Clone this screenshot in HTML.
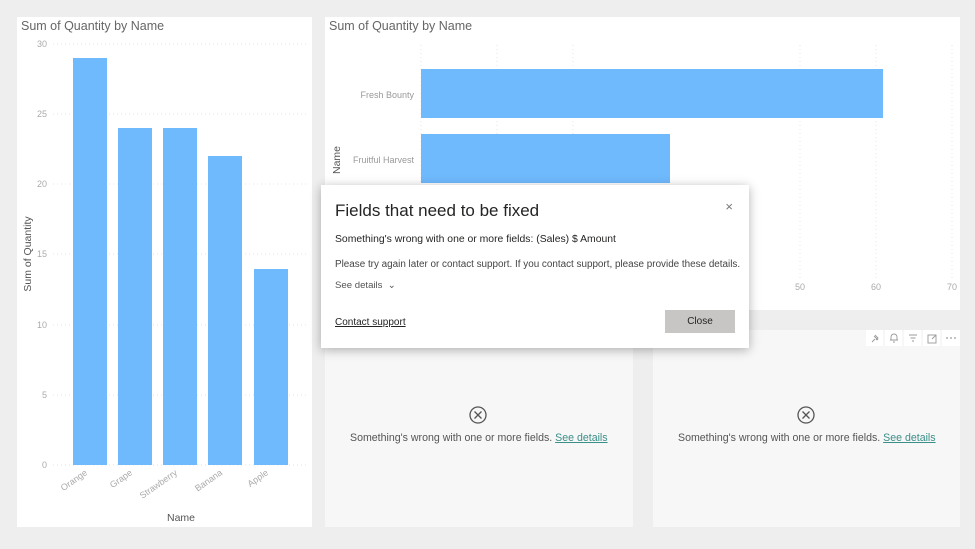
<!DOCTYPE html>
<html><head><meta charset="utf-8"><style>
body{margin:0;width:975px;height:549px;background:#eeeeee;font-family:"Liberation Sans",sans-serif;position:relative;overflow:hidden}
.p{position:absolute;background:#fff}
.modal{position:absolute;left:321px;top:185px;width:428px;height:163px;background:#fff;box-shadow:0 2px 10px rgba(0,0,0,.3)}
.modal div{position:absolute;white-space:nowrap;color:#252423}
.err{position:absolute;font-size:10.6px;color:#555;white-space:nowrap}
.err a{color:#3a8f88;text-decoration:underline}
</style></head><body>
<div class="p" style="left:17px;top:17px;width:295px;height:510px"></div>
<div class="p" style="left:325px;top:17px;width:635px;height:293px"></div>
<div class="p" style="left:325px;top:330px;width:308px;height:197px;background:#f7f7f7"></div>
<div class="p" style="left:653px;top:330px;width:307px;height:197px;background:#f7f7f7"></div>
<svg width="975" height="549" style="position:absolute;left:0;top:0" font-family="Liberation Sans, sans-serif">
<text x="21" y="30" font-size="12.5" fill="#666">Sum of Quantity by Name</text>
<g stroke="#e4e4e4" stroke-dasharray="1,3">
<line x1="53" x2="307" y1="44" y2="44"/><line x1="53" x2="307" y1="114" y2="114"/><line x1="53" x2="307" y1="184" y2="184"/><line x1="53" x2="307" y1="254" y2="254"/><line x1="53" x2="307" y1="325" y2="325"/><line x1="53" x2="307" y1="395" y2="395"/><line x1="53" x2="307" y1="465" y2="465"/>
</g>
<g font-size="9" fill="#aaa" text-anchor="end">
<text x="47" y="47">30</text><text x="47" y="117">25</text><text x="47" y="187">20</text><text x="47" y="257">15</text><text x="47" y="328">10</text><text x="47" y="398">5</text><text x="47" y="468">0</text>
</g>
<g fill="#6fb9fd">
<rect x="73" y="58" width="34" height="407"/><rect x="118" y="128" width="34" height="337"/><rect x="163" y="128" width="34" height="337"/><rect x="208" y="156" width="34" height="309"/><rect x="254" y="269" width="34" height="196"/>
</g>
<g font-size="9" fill="#aaa" text-anchor="end">
<text transform="translate(88,474) rotate(-35)">Orange</text>
<text transform="translate(133,474) rotate(-35)">Grape</text>
<text transform="translate(178,474) rotate(-35)">Strawberry</text>
<text transform="translate(223,474) rotate(-35)">Banana</text>
<text transform="translate(269,474) rotate(-35)">Apple</text>
</g>
<text x="181" y="521" font-size="10.5" fill="#555" text-anchor="middle">Name</text>
<text transform="translate(31,254) rotate(-90)" font-size="10.5" fill="#555" text-anchor="middle">Sum of Quantity</text>

<text x="329" y="30" font-size="12.5" fill="#666">Sum of Quantity by Name</text>
<g stroke="#e4e4e4" stroke-dasharray="1,3">
<line x1="421" x2="421" y1="45" y2="280"/><line x1="497" x2="497" y1="45" y2="280"/><line x1="573" x2="573" y1="45" y2="280"/><line x1="800" x2="800" y1="45" y2="280"/><line x1="876" x2="876" y1="45" y2="280"/><line x1="952" x2="952" y1="45" y2="280"/>
</g>
<rect x="421" y="69" width="462" height="49" fill="#6fb9fd"/>
<rect x="421" y="134" width="249" height="49" fill="#6fb9fd"/>
<g font-size="9" fill="#999" text-anchor="end">
<text x="414" y="98">Fresh Bounty</text><text x="414" y="163">Fruitful Harvest</text>
</g>
<text transform="translate(340,160) rotate(-90)" font-size="10.5" fill="#555" text-anchor="middle">Name</text>
<g font-size="9" fill="#aaa" text-anchor="middle"><text x="800" y="290">50</text><text x="876" y="290">60</text><text x="952" y="290">70</text></g>

<g fill="none" stroke="#555" stroke-width="1.3">
<circle cx="478" cy="415" r="8"/><path d="M474.5 411.5l7 7M481.5 411.5l-7 7"/>
<circle cx="806" cy="415" r="8"/><path d="M802.5 411.5l7 7M809.5 411.5l-7 7"/>
</g>
<g fill="#fff"><rect x="866" y="330" width="17" height="16"/><rect x="885" y="330" width="17" height="16"/><rect x="904" y="330" width="17" height="16"/><rect x="923" y="330" width="17" height="16"/><rect x="942" y="330" width="18" height="16"/></g>
<g fill="none" stroke="#999" stroke-width="0.9">
<path d="M872 342l3-3M874 336l4 4M875 335l3 3-2 2"/>
<path d="M890 340h8M891 340v-3a3 3 0 0 1 6 0v3M893 342h2"/>
<path d="M909 335h8M910.5 338h5M912 341h2"/>
<rect x="928" y="335" width="8" height="8"/><path d="M932 339l4-4"/>
</g>
<g fill="#999"><circle cx="947" cy="338" r="0.9"/><circle cx="951" cy="338" r="0.9"/><circle cx="955" cy="338" r="0.9"/></g>
</svg>
<div class="err" style="left:350px;top:432px">Something's wrong with one or more fields. <a>See details</a></div>
<div class="err" style="left:678px;top:432px">Something's wrong with one or more fields. <a>See details</a></div>

<div class="modal">
<div style="left:14px;top:16px;font-size:17px">Fields that need to be fixed</div>
<div style="right:16px;top:14px;font-size:13px;color:#777">×</div>
<div style="left:14px;top:49px;font-size:10.4px">Something's wrong with one or more fields: (Sales) $ Amount</div>
<div style="left:14px;top:74px;font-size:9.9px;color:#444">Please try again later or contact support. If you contact support, please provide these details.</div>
<div style="left:14px;top:95px;font-size:9.6px;color:#555">See details &nbsp;⌄</div>
<div style="left:14px;top:132px;font-size:10px;text-decoration:underline">Contact support</div>
<div style="left:344px;top:125px;width:70px;height:23px;background:#c8c6c4;font-size:10px;line-height:23px;text-align:center">Close</div>
</div>
</body></html>
